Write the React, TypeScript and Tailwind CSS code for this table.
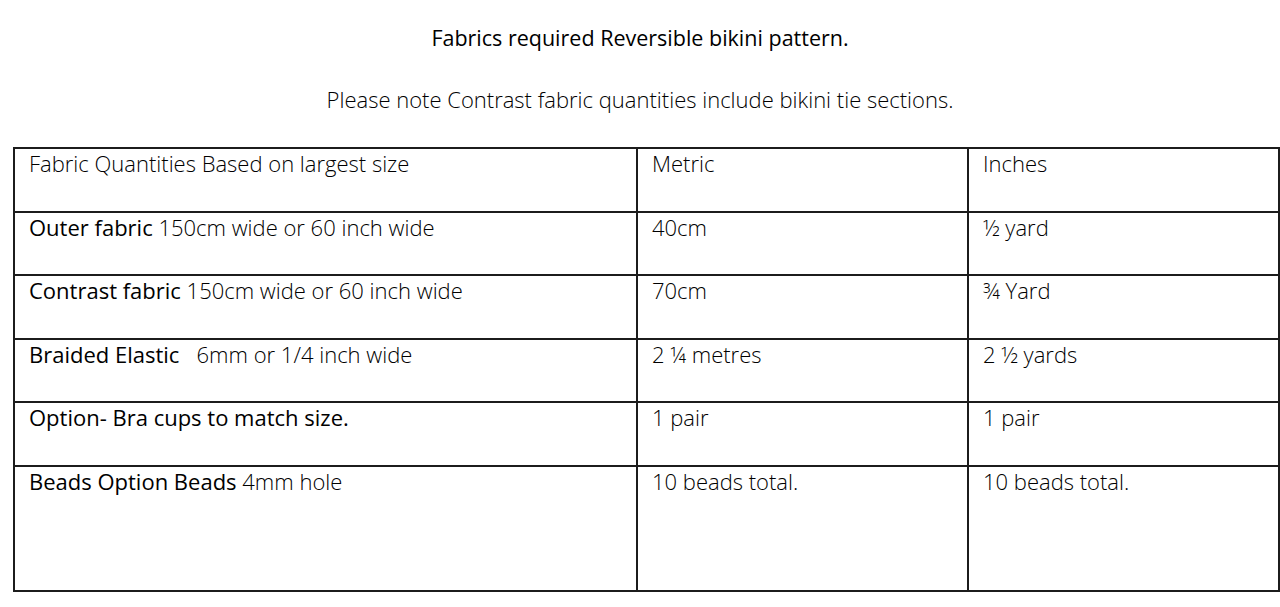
const rows: { bold?: string; text: string; metric: string; inches: string; tall?: boolean }[] = [
  { text: 'Fabric Quantities Based on largest size', metric: 'Metric', inches: 'Inches' },
  { bold: 'Outer fabric', text: ' 150cm wide or 60 inch wide', metric: '40cm', inches: '½ yard' },
  { bold: 'Contrast fabric', text: ' 150cm wide or 60 inch wide', metric: '70cm', inches: '¾ Yard' },
  { bold: 'Braided Elastic', text: '   6mm or 1/4 inch wide', metric: '2 ¼ metres', inches: '2 ½ yards' },
  { bold: 'Option- Bra cups to match size.', text: '', metric: '1 pair', inches: '1 pair' },
  { bold: 'Beads Option Beads', text: ' 4mm hole', metric: '10 beads total.', inches: '10 beads total.', tall: true },
];

export default function App() {
  return (
    <div className="min-h-[607px] bg-white text-black font-['Open_Sans',sans-serif] font-light">
      <div className="pt-[24px] text-center">
        <p className="text-[21.5px] leading-[28px] font-normal">Fabrics required Reversible bikini pattern.</p>
        <p className="mt-[33px] text-[22px] leading-[28px]">Please note Contrast fabric quantities include bikini tie sections.</p>
      </div>

      <table className="mt-[34px] ml-[13px] w-[1267px] border-collapse table-fixed text-[22px] leading-[28px]">
        <colgroup>
          <col className="w-[623px]" />
          <col className="w-[331px]" />
          <col />
        </colgroup>
        <tbody>
          {rows.map((r, i) => (
            <tr key={i} className={r.tall ? 'h-[125px]' : 'h-[63.5px]'}>
              <td className="border-2 border-[#1c1c1c] align-top pl-[14px] pt-0">
                {r.bold && <span className="font-normal whitespace-pre">{r.bold}</span>}
                <span className="whitespace-pre">{r.text}</span>
              </td>
              <td className="border-2 border-[#1c1c1c] align-top pl-[14px] pt-0">{r.metric}</td>
              <td className="border-2 border-[#1c1c1c] align-top pl-[14px] pt-0">{r.inches}</td>
            </tr>
          ))}
        </tbody>
      </table>
    </div>
  );
}
